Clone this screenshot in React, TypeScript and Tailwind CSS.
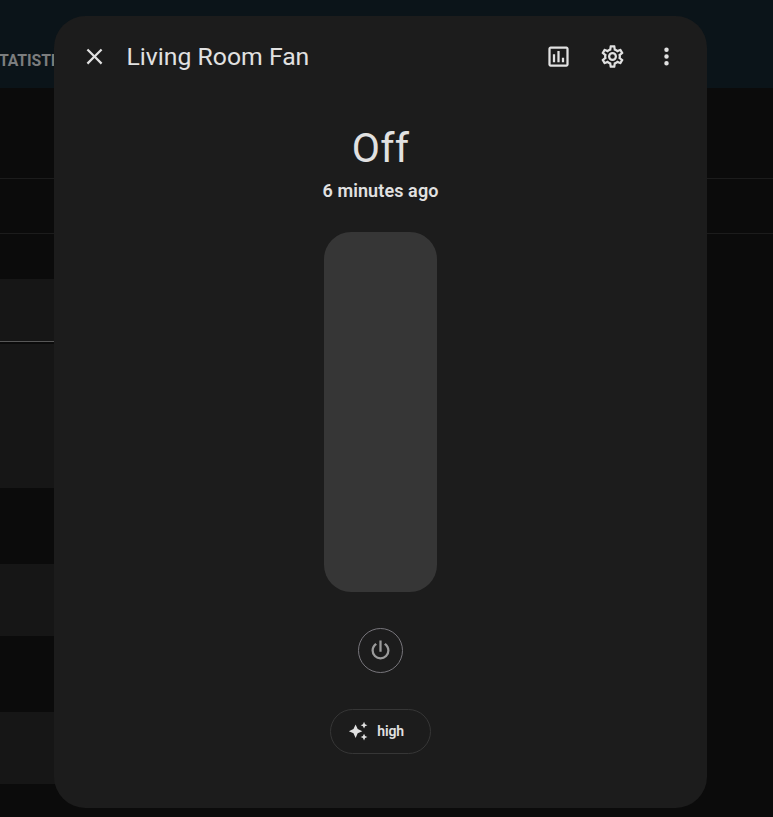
import type { ReactNode } from "react";

const icons = {
  close:
    "M19,6.41L17.59,5L12,10.59L6.41,5L5,6.41L10.59,12L5,17.59L6.41,19L12,13.41L17.59,19L19,17.59L13.41,12L19,6.41Z",
  chart:
    "M9 17H7V10H9V17M13 17H11V7H13V17M17 17H15V13H17V17M19 19H5V5H19V19.1M19 3H5C3.9 3 3 3.9 3 5V19C3 20.1 3.9 21 5 21H19C20.1 21 21 20.1 21 19V5C21 3.9 20.1 3 19 3Z",
  cog: "M12,8A4,4 0 0,1 16,12A4,4 0 0,1 12,16A4,4 0 0,1 8,12A4,4 0 0,1 12,8M12,10A2,2 0 0,0 10,12A2,2 0 0,0 12,14A2,2 0 0,0 14,12A2,2 0 0,0 12,10M10,22C9.75,22 9.54,21.82 9.5,21.58L9.13,18.93C8.5,18.68 7.96,18.34 7.44,17.94L4.95,18.95C4.73,19.03 4.46,18.95 4.34,18.73L2.34,15.27C2.21,15.05 2.27,14.78 2.46,14.63L4.57,12.97L4.5,12L4.57,11L2.46,9.37C2.27,9.22 2.21,8.95 2.34,8.73L4.34,5.27C4.46,5.05 4.73,4.96 4.95,5.05L7.44,6.05C7.96,5.66 8.5,5.32 9.13,5.07L9.5,2.42C9.54,2.18 9.75,2 10,2H14C14.25,2 14.46,2.18 14.5,2.42L14.87,5.07C15.5,5.32 16.04,5.66 16.56,6.05L19.05,5.05C19.27,4.96 19.54,5.05 19.66,5.27L21.66,8.73C21.79,8.95 21.73,9.22 21.54,9.37L19.43,11L19.5,12L19.43,13L21.54,14.63C21.73,14.78 21.79,15.05 21.66,15.27L19.66,18.73C19.54,18.95 19.27,19.04 19.05,18.95L16.56,17.95C16.04,18.34 15.5,18.68 14.87,18.93L14.5,21.58C14.46,21.82 14.25,22 14,22H10M11.25,4L10.88,6.61C9.68,6.86 8.62,7.5 7.85,8.39L5.44,7.35L4.69,8.65L6.8,10.2C6.4,11.37 6.4,12.64 6.8,13.8L4.68,15.36L5.43,16.66L7.86,15.62C8.63,16.5 9.68,17.14 10.87,17.38L11.24,20H12.76L13.13,17.39C14.32,17.14 15.37,16.5 16.14,15.62L18.57,16.66L19.32,15.36L17.2,13.81C17.6,12.64 17.6,11.37 17.2,10.2L19.31,8.65L18.56,7.35L16.15,8.39C15.38,7.5 14.32,6.86 13.12,6.62L12.75,4H11.25Z",
  dots: "M12,16A2,2 0 0,1 14,18A2,2 0 0,1 12,20A2,2 0 0,1 10,18A2,2 0 0,1 12,16M12,10A2,2 0 0,1 14,12A2,2 0 0,1 12,14A2,2 0 0,1 10,12A2,2 0 0,1 12,10M12,4A2,2 0 0,1 14,6A2,2 0 0,1 12,8A2,2 0 0,1 10,6A2,2 0 0,1 12,4Z",
  power:
    "M16.56,5.44L15.11,6.89C16.84,7.94 18,9.83 18,12A6,6 0 0,1 12,18A6,6 0 0,1 6,12C6,9.83 7.16,7.94 8.88,6.88L7.44,5.44C5.36,6.88 4,9.28 4,12A8,8 0 0,0 12,20A8,8 0 0,0 20,12C20,9.28 18.64,6.88 16.56,5.44M13,3H11V13H13",
  sparkle:
    "M19,1L17.74,3.75L15,5L17.74,6.26L19,9L20.25,6.26L23,5L20.25,3.75M9,4L6.5,9.5L1,12L6.5,14.5L9,20L11.5,14.5L17,12L11.5,9.5M19,15L17.74,17.74L15,19L17.74,20.25L19,23L20.25,20.25L23,19L20.25,17.74",
};

function Icon({ path, className = "size-[27px]" }: { path: string; className?: string }) {
  return (
    <svg viewBox="0 0 24 24" fill="currentColor" className={`shrink-0 ${className}`}>
      <path d={path} />
    </svg>
  );
}

function IconButton({ label, children }: { label: string; children: ReactNode }) {
  return (
    <button aria-label={label} className="flex size-[54px] items-center justify-center">
      {children}
    </button>
  );
}

function Backdrop() {
  return (
    <div className="flex h-full flex-col bg-[#0b0b0b]">
      <div className="h-[88px] shrink-0 bg-[#0b1419] pt-[51px]">
        <div className="-ml-[1px] text-[15.75px] leading-5 font-bold tracking-[-0.1px] text-[#7b7d7e]">
          TATISTICS
        </div>
      </div>
      <div className="h-[91px] shrink-0 border-b border-[#1c1c1c]" />
      <div className="h-[55px] shrink-0 border-b border-[#1c1c1c]" />
      <div className="mt-[45px] h-[63px] w-[380px] shrink-0 border-b border-[#575757] bg-[#161616]" />
      <div className="mt-[2px] h-[144px] w-[380px] shrink-0 bg-[#161616]" />
      <div className="mt-[76px] h-[72px] w-[380px] shrink-0 bg-[#161616]" />
      <div className="mt-[76px] h-[72px] w-[380px] shrink-0 bg-[#161616]" />
    </div>
  );
}

function Dialog() {
  return (
    <section className="absolute top-4 left-[54px] flex h-[792px] w-[653px] flex-col rounded-[31.5px] bg-[#1c1c1c] text-[#e1e1e1]">
      <header className="flex h-[81px] shrink-0 items-center pr-[13.5px] pl-[13.5px]">
        <IconButton label="Close">
          <Icon path={icons.close} />
        </IconButton>
        <h1 className="ml-[5px] flex-1 text-[24.75px] leading-[31px]">Living Room Fan</h1>
        <IconButton label="History">
          <Icon path={icons.chart} />
        </IconButton>
        <IconButton label="Settings">
          <Icon path={icons.cog} />
        </IconButton>
        <IconButton label="More">
          <Icon path={icons.dots} />
        </IconButton>
      </header>
      <main className="flex flex-col items-center pt-[27px]">
        <p className="text-[41px] leading-[48px] tracking-[0.2px]">Off</p>
        <p className="mt-[5px] text-[18px] leading-[27px] font-semibold tracking-[0.1px]">6 minutes ago</p>
        <div className="mt-[28px] h-[360px] w-[113px] rounded-[27px] bg-[#363636]" />
        <button
          aria-label="Power"
          className="mt-9 flex size-[45px] items-center justify-center rounded-full border border-[#77757b] text-[#9b9b9b]"
        >
          <Icon path={icons.power} />
        </button>
        <button className="mt-9 flex h-[45px] w-[101px] items-center rounded-full border border-[#363636] pl-[17px] text-[14px] font-semibold">
          <Icon path={icons.sparkle} className="size-[20.25px]" />
          <span className="ml-[9px] tracking-[-0.1px]">high</span>
        </button>
      </main>
    </section>
  );
}

export default function App() {
  return (
    <div className="relative h-[817px] w-[773px] overflow-hidden bg-[#0b0b0b] font-[Roboto,sans-serif]">
      <Backdrop />
      <Dialog />
    </div>
  );
}
